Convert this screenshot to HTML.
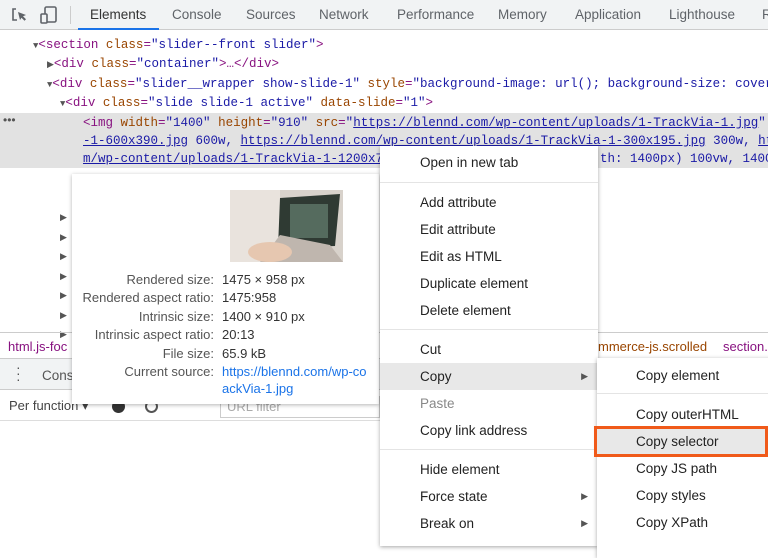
<!DOCTYPE html>
<html><head><style>
*{margin:0;padding:0;box-sizing:border-box}
body{width:768px;height:539px;overflow:hidden;background:#fff;font-family:"Liberation Sans",sans-serif;position:relative}
.a{position:absolute;white-space:nowrap}
.tabs{position:absolute;left:0;top:0;width:768px;height:30px;background:#f1f3f4;border-bottom:1px solid #ccc}
.tab{position:absolute;top:7px;font-size:13.5px;color:#5f6368}
.code{font-family:"Liberation Mono",monospace;font-size:12.5px;color:#881280}
.an{color:#994500}.av{color:#1a1aa6}.lk{color:#1a1aa6;text-decoration:underline}
.tri{font-size:9px;color:#555}
.menu{position:absolute;background:#fff;box-shadow:0 1px 4px rgba(0,0,0,.35);font-size:13.5px;color:#222}
.mi{position:absolute;left:0;right:0;height:27px;line-height:27px}
.sep{position:absolute;left:0;right:0;height:1px;background:#e4e4e4}
.arr{position:absolute;right:10px;font-size:9px;color:#555}
.tt{position:absolute;left:72px;top:174px;width:307px;height:230px;background:#fff;box-shadow:0 1px 4px rgba(0,0,0,.3);font-size:13px;color:#555}
.lbl{position:absolute;right:165px;text-align:right;white-space:nowrap}
.val{position:absolute;left:150px;white-space:nowrap;color:#333}
</style></head><body>
<div class="tabs">
<svg class="a" style="left:10px;top:6px" width="18" height="18" viewBox="0 0 18 18"><path d="M6 3H3v11h4" fill="none" stroke="#5f6368" stroke-width="1.6"/><path d="M8 6l8 3-3 1.2 3 3-1.5 1.5-3-3L10 14z" fill="#5f6368"/></svg>
<svg class="a" style="left:38px;top:5px" width="20" height="20" viewBox="0 0 20 20"><rect x="7" y="2" width="11" height="15" rx="1.5" fill="none" stroke="#5f6368" stroke-width="1.6"/><rect x="3" y="9" width="6" height="9" rx="1" fill="#f1f3f4" stroke="#5f6368" stroke-width="1.6"/></svg>
<div class="a" style="left:70px;top:6px;width:1px;height:18px;background:#ccc"></div>
<div class="tab" style="left:90px;color:#333">Elements</div>
<div class="a" style="left:78px;top:28px;width:81px;height:2px;background:#1a73e8"></div>
<div class="tab" style="left:172px">Console</div>
<div class="tab" style="left:246px">Sources</div>
<div class="tab" style="left:319px">Network</div>
<div class="tab" style="left:397px">Performance</div>
<div class="tab" style="left:498px">Memory</div>
<div class="tab" style="left:575px">Application</div>
<div class="tab" style="left:669px">Lighthouse</div>
<div class="tab" style="left:762px">R</div>
</div>
<div class="a" style="left:0;top:113px;width:768px;height:55px;background:#e2e2e2"></div>
<div class="a code" style="left:33px;top:38px"><span class="tri">▼</span>&lt;section <span class="an">class</span>=<span class="av">"slider--front slider"</span>&gt;</div>
<div class="a code" style="left:47px;top:57px"><span class="tri">▶</span>&lt;div <span class="an">class</span>=<span class="av">"container"</span>&gt;…&lt;/div&gt;</div>
<div class="a code" style="left:47px;top:77px"><span class="tri">▼</span>&lt;div <span class="an">class</span>=<span class="av">"slider__wrapper show-slide-1"</span> <span class="an">style</span>=<span class="av">"background-image: url(); background-size: cover</span></div>
<div class="a code" style="left:60px;top:96px"><span class="tri">▼</span>&lt;div <span class="an">class</span>=<span class="av">"slide slide-1 active"</span> <span class="an">data-slide</span>=<span class="av">"1"</span>&gt;</div>
<div class="a" style="left:3px;top:113px;font-size:12px;color:#555">•••</div>
<div class="a code" style="left:83px;top:116px">&lt;img <span class="an">width</span>=<span class="av">"1400"</span> <span class="an">height</span>=<span class="av">"910"</span> <span class="an">src</span>=<span class="av">"</span><span class="lk">https://blennd.com/wp-content/uploads/1-TrackVia-1.jpg</span><span class="av">"</span></div>
<div class="a code" style="left:83px;top:134px"><span class="lk">-1-600x390.jpg</span><span class="av"> 600w, </span><span class="lk">https://blennd.com/wp-content/uploads/1-TrackVia-1-300x195.jpg</span><span class="av"> 300w, </span><span class="lk">htt</span></div>
<div class="a code" style="left:83px;top:152px"><span class="lk">m/wp-content/uploads/1-TrackVia-1-1200x7</span></div>
<div class="a code" style="left:600px;top:152px"><span class="av">th: 1400px) 100vw, 1400p</span></div>
<div class="a tri" style="left:60px;top:208px;line-height:19.5px">▶<br>▶<br>▶<br>▶<br>▶<br>▶<br>▶</div>
<div class="a" style="left:0;top:332px;width:768px;height:1px;background:#ccc"></div>
<div class="a" style="left:8px;top:339px;font-size:13px;color:#881280">html.js-foc</div>
<div class="a" style="left:598px;top:339px;font-size:13px;color:#994500">mmerce-js.scrolled</div>
<div class="a" style="left:723px;top:339px;font-size:13px;color:#881280">section.</div>
<div class="a" style="left:0;top:358px;width:768px;height:32px;background:#f1f3f4;border-top:1px solid #ccc;border-bottom:1px solid #ccc"></div>
<div class="a" style="left:16px;top:364px;font-size:14px;color:#555;line-height:6px">·<br>·<br>·</div>
<div class="a" style="left:42px;top:368px;font-size:13.5px;color:#555">Cons</div>
<div class="a" style="left:9px;top:398px;font-size:13px;color:#444">Per function ▾</div>
<div class="a" style="left:112px;top:400px;width:13px;height:13px;border-radius:50%;background:#333"></div>
<div class="a" style="left:145px;top:400px;width:13px;height:13px;border-radius:50%;border:2px solid #555"></div>
<div class="a" style="left:220px;top:396px;width:160px;height:22px;border:1px solid #ccc;font-size:13px;color:#aaa;padding:2px 6px">URL filter</div>
<div class="a" style="left:0;top:420px;width:768px;height:1px;background:#ddd"></div>

<div class="tt">
<svg class="a" style="left:158px;top:16px" width="113" height="72" viewBox="0 0 113 72"><rect width="113" height="72" fill="#d8d2cb"/><rect x="0" y="0" width="50" height="72" fill="#e9e3dd"/><polygon points="50,8 110,4 105,56 48,58" fill="#2f3a33"/><rect x="60" y="14" width="38" height="34" fill="#556b5e"/><polygon points="30,72 50,45 100,55 113,72" fill="#bfb6ae"/><ellipse cx="40" cy="62" rx="22" ry="10" fill="#e6c7b0"/></svg>
<div class="lbl" style="top:98px">Rendered size:</div><div class="val" style="top:98px">1475 × 958 px</div>
<div class="lbl" style="top:116px">Rendered aspect ratio:</div><div class="val" style="top:116px">1475:958</div>
<div class="lbl" style="top:135px">Intrinsic size:</div><div class="val" style="top:135px">1400 × 910 px</div>
<div class="lbl" style="top:153px">Intrinsic aspect ratio:</div><div class="val" style="top:153px">20:13</div>
<div class="lbl" style="top:172px">File size:</div><div class="val" style="top:172px">65.9 kB</div>
<div class="lbl" style="top:190px">Current source:</div><div class="val" style="top:190px;color:#1a73e8">https://blennd.com/wp-co</div>
<div class="val" style="top:207px;color:#1a73e8">ackVia-1.jpg</div>
</div>

<div class="menu" style="left:380px;top:146px;width:218px;height:400px">
<div class="mi" style="top:3px;padding-left:40px">Open in new tab</div>
<div class="sep" style="top:36px"></div>
<div class="mi" style="top:43px;padding-left:40px">Add attribute</div>
<div class="mi" style="top:70px;padding-left:40px">Edit attribute</div>
<div class="mi" style="top:97px;padding-left:40px">Edit as HTML</div>
<div class="mi" style="top:124px;padding-left:40px">Duplicate element</div>
<div class="mi" style="top:151px;padding-left:40px">Delete element</div>
<div class="sep" style="top:183px"></div>
<div class="mi" style="top:190px;padding-left:40px">Cut</div>
<div class="mi" style="top:217px;padding-left:40px;background:#e8e8e8">Copy<span class="arr">▶</span></div>
<div class="mi" style="top:244px;padding-left:40px;color:#888">Paste</div>
<div class="mi" style="top:271px;padding-left:40px">Copy link address</div>
<div class="sep" style="top:303px"></div>
<div class="mi" style="top:310px;padding-left:40px">Hide element</div>
<div class="mi" style="top:337px;padding-left:40px">Force state<span class="arr">▶</span></div>
<div class="mi" style="top:364px;padding-left:40px">Break on<span class="arr">▶</span></div>
</div>

<div class="menu" style="left:597px;top:358px;width:180px;height:200px">
<div class="mi" style="top:4px;padding-left:39px">Copy element</div>
<div class="sep" style="top:35px"></div>
<div class="mi" style="top:43px;padding-left:39px">Copy outerHTML</div>
<div class="mi" style="top:70px;padding-left:39px;background:#e8e8e8">Copy selector</div>
<div class="mi" style="top:97px;padding-left:39px">Copy JS path</div>
<div class="mi" style="top:124px;padding-left:39px">Copy styles</div>
<div class="mi" style="top:151px;padding-left:39px">Copy XPath</div>
</div>
<div class="a" style="left:594px;top:426px;width:174px;height:31px;border:3px solid #f05a1a"></div>
</body></html>
